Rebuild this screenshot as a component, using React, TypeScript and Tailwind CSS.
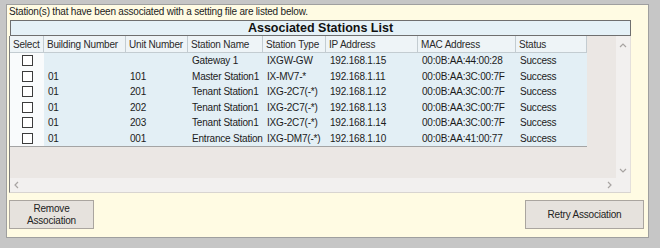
import React from "react";

const rows = [
  { bld: "", unit: "", name: "Gateway 1", type: "IXGW-GW", ip: "192.168.1.15", mac: "00:0B:AA:44:00:28", status: "Success" },
  { bld: "01", unit: "101", name: "Master Station1", type: "IX-MV7-*", ip: "192.168.1.11", mac: "00:0B:AA:3C:00:7F", status: "Success" },
  { bld: "01", unit: "201", name: "Tenant Station1", type: "IXG-2C7(-*)", ip: "192.168.1.12", mac: "00:0B:AA:3C:00:7F", status: "Success" },
  { bld: "01", unit: "202", name: "Tenant Station1", type: "IXG-2C7(-*)", ip: "192.168.1.13", mac: "00:0B:AA:3C:00:7F", status: "Success" },
  { bld: "01", unit: "203", name: "Tenant Station1", type: "IXG-2C7(-*)", ip: "192.168.1.14", mac: "00:0B:AA:3C:00:7F", status: "Success" },
  { bld: "01", unit: "001", name: "Entrance Station", type: "IXG-DM7(-*)", ip: "192.168.1.10", mac: "00:0B:AA:41:00:77", status: "Success" },
];

const headers = ["Building Number", "Unit Number", "Station Name", "Station Type", "IP Address", "MAC Address", "Status"];

// small gray chevron for the scroll bars
function Chevron({ dir }: { dir: "up" | "down" | "left" | "right" }) {
  const pts = {
    up: "1,5 4,2 7,5",
    down: "1,2 4,5 7,2",
    left: "5,1 2,4 5,7",
    right: "2,1 5,4 2,7",
  }[dir];
  return (
    <svg width="8" height="8" viewBox="0 0 8 8">
      <polyline points={pts} fill="none" stroke="#a8a4a2" strokeWidth="1.2" />
    </svg>
  );
}

export default function App() {
  return (
    <div
      className="w-[660px] h-[248px] bg-[#c6c6c6] pt-[4px] pl-[6px] text-[10px] tracking-[-0.2px] text-[#1b1b1b]"
      style={{ fontFamily: '"Liberation Sans", Arial, sans-serif' }}
    >
      <div className="w-[643px] h-[234px] bg-[#fffbe3] border border-[#9f9f9f] flex flex-col">
        {/* caption */}
        <div className="pl-[2px] h-[14px] leading-[14px] text-[#222]">
          Station(s) that have been associated with a setting file are listed below.
        </div>

        {/* title bar */}
        <div className="ml-[3px] mt-[1px] w-[621px] h-[16px] bg-[#e5f1f7] border border-[#6f6f6f] flex items-center justify-center">
          <span className="font-bold text-[12.5px] tracking-normal text-[#111] leading-none">Associated Stations List</span>
        </div>

        {/* list view */}
        <div className="ml-[2px] w-[622px] h-[157px] border-l border-[#7d7d7d] border-r border-r-[#e4e0dc] border-b border-b-[#d8d4d0] flex flex-col">
          <div className="flex flex-row h-[142px]">
            <div className="flex-1 bg-[#ebe7e4]">
              <div className="w-[577px] grid grid-cols-[34px_82px_62px_75px_63px_92px_98px_71px] border-r border-b border-[#a4a4a4]">
                <div className="h-[17px] bg-[#eef4f7] border-r border-b border-[#c3ccd1] pl-[3px] flex items-center text-[#2a2a2a]">Select</div>
                {headers.map((h) => (
                  <div key={h} className="h-[17px] bg-[#eef4f7] border-r border-b border-[#c3ccd1] pl-[3px] flex items-center text-[#2a2a2a] whitespace-nowrap">
                    {h}
                  </div>
                ))}
                {rows.map((r, i) => (
                  <React.Fragment key={i}>
                    <div className="h-[15.5px] bg-[#f9fbfc] flex items-center justify-center">
                      <div className="w-[11px] h-[11px] border border-[#3c3c3c] bg-white" />
                    </div>
                    {[r.bld, r.unit, r.name, r.type, r.ip, r.mac, r.status].map((v, j) => (
                      <div key={j} className="h-[15.5px] bg-[#e3eff5] pl-[4px] flex items-center whitespace-nowrap overflow-hidden">
                        {v}
                      </div>
                    ))}
                  </React.Fragment>
                ))}
              </div>
            </div>
            <div className="w-[14px] bg-[#f2f0ef] flex flex-col items-center justify-between pt-[6px] pb-[3px]">
              <Chevron dir="up" />
              <Chevron dir="down" />
            </div>
          </div>
          <div className="h-[14px] bg-[#f2f0ef] flex flex-row items-center justify-between pl-[3px] pr-[16px]">
            <Chevron dir="left" />
            <Chevron dir="right" />
          </div>
        </div>

        {/* buttons */}
        <div className="mt-[7px] ml-[2px] mr-[4px] flex flex-row justify-between">
          <button className="w-[85px] h-[29px] bg-[#e6e2dd] border border-[#aaa59f] leading-[12px] text-[#222] flex flex-col items-center justify-center">
            <span>Remove</span>
            <span>Association</span>
          </button>
          <button className="w-[119px] h-[29px] bg-[#e6e2dd] border border-[#aaa59f] text-[#222] flex items-center justify-center">
            Retry Association
          </button>
        </div>
      </div>
    </div>
  );
}
